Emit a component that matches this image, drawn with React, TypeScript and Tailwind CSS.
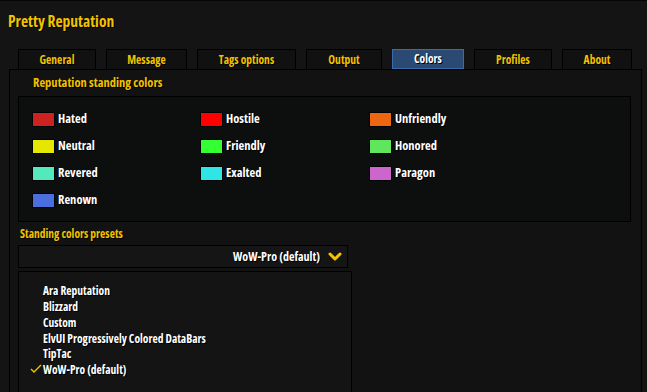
import React from 'react';

const tabs = [
  { name: 'General', w: 'w-[78px]' },
  { name: 'Message', w: 'w-[81px]' },
  { name: 'Tags options', w: 'w-[99px]' },
  { name: 'Output', w: 'w-[76px]' },
  { name: 'Colors', w: 'w-[72px]', active: true },
  { name: 'Profiles', w: 'w-[78px]' },
  { name: 'About', w: 'w-[70px]' },
];

const standings = [
  { name: 'Hated', color: 'bg-[#cc2222]' },
  { name: 'Hostile', color: 'bg-[#ff0000]' },
  { name: 'Unfriendly', color: 'bg-[#ee6611]' },
  { name: 'Neutral', color: 'bg-[#e6e600]' },
  { name: 'Friendly', color: 'bg-[#33ff33]' },
  { name: 'Honored', color: 'bg-[#5fe65d]' },
  { name: 'Revered', color: 'bg-[#53e9bc]' },
  { name: 'Exalted', color: 'bg-[#2ee6e6]' },
  { name: 'Paragon', color: 'bg-[#cc66cc]' },
  { name: 'Renown', color: 'bg-[#4a6ee0]' },
];

const presets = [
  'Ara Reputation',
  'Blizzard',
  'Custom',
  'ElvUI Progressively Colored DataBars',
  'TipTac',
  'WoW-Pro (default)',
];

export default function App() {
  return (
    <div className="w-[647px] h-[392px] overflow-hidden bg-[#141414] border-t border-[#050505] font-['Open_Sans',sans-serif] [font-stretch:condensed] font-bold [text-shadow:1px_1px_0_#000]">
      {/* Title */}
      <div className="h-[48px] pl-[8px] pt-[9px] text-[15.5px] leading-[22px] text-[#f2c200]">
        Pretty Reputation
      </div>

      {/* Tabs */}
      <div className="flex gap-[10px] pl-[18px] h-[20px]">
        {tabs.map((t) => (
          <div
            key={t.name}
            className={`${t.w} h-[20px] flex items-center justify-center text-[11.5px] border ${
              t.active
                ? 'bg-[#2b4a73] border-[#3a6cb0] text-white'
                : 'bg-[#111111] border-[#000] border-b-0 text-[#f2c200]'
            }`}
          >
            {t.name}
          </div>
        ))}
      </div>

      {/* Panel */}
      <div className="ml-[9px] w-[633px] h-[330px] border border-black bg-[#121212]">
        <div className="pl-[23px] h-[26px] flex items-center text-[12.5px] text-[#f2c200]">
          Reputation standing colors
        </div>

        {/* Standing colors group */}
        <div className="ml-[8px] w-[613px] h-[126px] border border-black bg-[#0d0e0e] pl-[13px] pt-[9px]">
          <div className="grid grid-cols-[168px_169px_168px]">
            {standings.map((s) => (
              <div key={s.name} className="h-[27px] flex items-center gap-[3px]">
                <div className={`w-[23px] h-[15px] border border-black ${s.color}`} />
                <span className="text-[12.5px] text-white">{s.name}</span>
              </div>
            ))}
          </div>
        </div>

        {/* Presets */}
        <div className="pl-[10px] h-[20px] flex items-end text-[11.5px] text-[#f2c200]">
          Standing colors presets
        </div>
        <div className="ml-[8px] mt-[3px] w-[330px] h-[23px] border border-black bg-[#151515] flex items-center justify-end pr-[5px] gap-[8px]">
          <span className="text-[12px] text-white">WoW-Pro (default)</span>
          <svg width="14" height="9" viewBox="0 0 14 9">
            <polyline points="2,2 7,7 12,2" fill="none" stroke="#f5c400" strokeWidth="3" strokeLinecap="round" strokeLinejoin="round" />
          </svg>
        </div>

        {/* Dropdown list */}
        <div className="ml-[8px] mt-[3px] w-[334px] h-[140px] border border-black bg-[#141414] pt-[11px]">
          {presets.map((p, i) => (
            <div key={p} className="relative h-[15.8px] flex items-center pl-[24px] text-[11.5px] text-white">
              {i === presets.length - 1 && (
                <svg className="absolute left-[11px] top-[2px]" width="12" height="10" viewBox="0 0 12 10">
                  <polyline points="1,5 4,8 11,1" fill="none" stroke="#f2c200" strokeWidth="1.4" />
                </svg>
              )}
              {p}
            </div>
          ))}
        </div>
      </div>
    </div>
  );
}
